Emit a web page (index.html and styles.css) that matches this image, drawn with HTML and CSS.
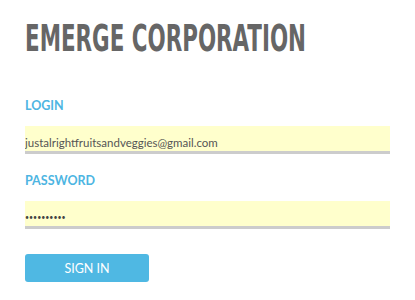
FILE: index.html
```html
<!DOCTYPE html>
<html>
<head>
<meta charset="utf-8">
<link rel="stylesheet" href="styles.css">
</head>
<body>
<main class="page">
  <h1 class="brand"><span class="brand-text">EMERGE CORPORATION</span></h1>
  <form class="form">
    <label class="label" for="login">LOGIN</label>
    <input class="field" id="login" type="text" value="justalrightfruitsandveggies@gmail.com">
    <label class="label label-pass" for="pass">PASSWORD</label>
    <input class="field field-pass" id="pass" type="password" value="abcdefghij">
    <button class="btn" type="button">SIGN IN</button>
  </form>
</main>
</body>
</html>
```
FILE: styles.css
```css
html, body {
  margin: 0;
  background: #ffffff;
}
.page {
  padding: 15px 25px 0 25px;
  font-family: Lato, "Open Sans", sans-serif;
}
.brand {
  margin: 0;
  height: 47px;
  line-height: 46px;
  font-family: "DejaVu Sans Condensed", "DejaVu Sans", sans-serif;
  font-stretch: condensed;
  font-weight: bold;
  font-size: 37.5px;
  color: #666666;
  white-space: nowrap;
  overflow: hidden;
}
.brand-text {
  display: inline-block;
  transform-origin: left center;
  transform: scaleX(0.635);
}
.form {
  display: flex;
  flex-direction: column;
  align-items: flex-start;
  padding-top: 36px;
}
.label {
  font-size: 12.5px;
  font-weight: bold;
  color: #4db5e2;
  line-height: 16px;
}
.field {
  margin-top: 12px;
  width: 365px;
  height: 18px;
  box-sizing: content-box;
  padding: 7px 0 0 0;
  border: none;
  border-bottom: 3px solid #cccccc;
  background: #ffffcc;
  font-family: Lato, sans-serif;
  font-size: 11.5px;
  color: #555555;
  outline: none;
}
.field-pass {
  font-size: 7px;
  color: #444444;
}
.label-pass {
  margin-top: 19px;
}
.btn {
  margin-top: 25px;
  width: 124px;
  height: 28px;
  border: none;
  border-radius: 3px;
  background: #4fb8e3;
  color: #ffffff;
  font-family: Lato, sans-serif;
  font-size: 12.5px;
  padding: 0;
}
```
